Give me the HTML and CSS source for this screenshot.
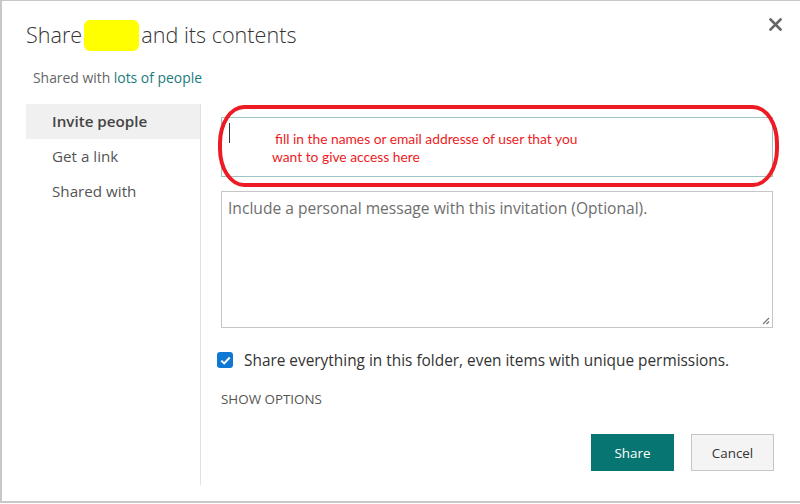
FILE: index.html
```html
<!DOCTYPE html>
<html lang="en">
<head>
<meta charset="utf-8">
<title>Share</title>
<link rel="stylesheet" href="styles.css">
</head>
<body>
<div class="dialog">
  <header class="head">
    <h1 class="title">Share<span class="redact"></span>and its contents</h1>
    <button class="close" aria-label="Close">
      <svg width="13" height="13" viewBox="0 0 13 13"><path d="M1.5 1.5 L11.5 11.5 M11.5 1.5 L1.5 11.5" stroke="#666" stroke-width="2.6" stroke-linecap="square" fill="none"/></svg>
    </button>
  </header>
  <p class="shared">Shared with <a class="link">lots of people</a></p>
  <div class="body">
    <nav class="nav">
      <div class="nav-item active">Invite people</div>
      <div class="nav-item">Get a link</div>
      <div class="nav-item">Shared with</div>
    </nav>
    <main class="main">
      <div class="picker-wrap">
        <div class="picker"><span class="caret"></span></div>
        <div class="annot">
          <p class="annot-text"><span class="l1">fill in the names or email addresse of user that you</span><br>want to give access here</p>
        </div>
      </div>
      <div class="message">
        <span class="placeholder">Include a personal message with this invitation (Optional).</span>
        <svg class="grip" width="9" height="9" viewBox="0 0 9 9"><path d="M8 2 L2 8 M8 5.5 L5.5 8" stroke="#777" stroke-width="1.2" fill="none"/></svg>
      </div>
      <label class="check">
        <span class="box"><svg width="11" height="9" viewBox="0 0 11 9"><path d="M1.3 4.6 L4.2 7.4 L9.7 1.5" stroke="#fff" stroke-width="2" fill="none"/></svg></span>
        <span class="check-text">Share everything in this folder, even items with unique permissions.</span>
      </label>
      <div class="options">SHOW OPTIONS</div>
      <div class="actions">
        <button class="btn primary">Share</button>
        <button class="btn">Cancel</button>
      </div>
    </main>
  </div>
</div>
</body>
</html>
```
FILE: styles.css
```css
* { box-sizing: border-box; }
html, body { margin: 0; padding: 0; background: #fff; }
body { font-family: "Open Sans", "Noto Sans", sans-serif; color: #333; }

.dialog {
  width: 800px;
  height: 503px;
  border-top: 1px solid #c8c8c8;
  border-left: 2px solid #c8c8c8;
  border-bottom: 2px solid #c8c8c8;
  display: flex;
  flex-direction: column;
}

.head {
  display: flex;
  justify-content: space-between;
  align-items: flex-start;
  padding: 18px 18px 0 24px;
}
.title {
  margin: 0;
  font-size: 21.6px;
  font-weight: 300;
  line-height: 32px;
  color: #333;
  display: flex;
  align-items: center;
}
.redact {
  display: inline-block;
  width: 55px;
  height: 31px;
  margin: 0 2px 0 2px;
  background: #ffff00;
  border-radius: 6px;
}
.close {
  border: 0;
  background: none;
  padding: 0;
  margin-top: -1px;
  width: 13px;
  height: 13px;
  display: block;
}
.close svg { display: block; }

.shared {
  margin: 17px 0 0 31px;
  font-size: 13.9px;
  line-height: 20px;
  color: #666;
}
.link { color: #1b7b7b; }

.body {
  display: flex;
  margin-top: 16px;
  height: 381px;
}
.nav {
  width: 175px;
  margin-left: 24px;
  border-right: 1px solid #e1e1e1;
}
.nav-item {
  height: 35px;
  line-height: 35px;
  padding-left: 26px;
  font-size: 15.2px;
  color: #555;
}
.nav-item.active {
  background: #f0f0f0;
  font-weight: 600;
  color: #444;
}

.main {
  width: 552px;
  margin-left: 20px;
  padding-top: 13px;
  display: flex;
  flex-direction: column;
}

.picker-wrap { position: relative; }
.picker {
  height: 60px;
  border: 1px solid #9cc4c4;
  padding: 5px 0 0 7px;
}
.caret {
  display: block;
  width: 1px;
  height: 20px;
  background: #333;
}
.annot {
  position: absolute;
  left: -3px;
  right: -6px;
  top: -12px;
  bottom: -10px;
  border: 4px solid #ed1c24;
  border-radius: 26px / 38px;
}
.annot-text {
  margin: 0;
  position: absolute;
  left: 50px;
  top: 21px;
  font-family: "Lato", sans-serif;
  font-size: 13.8px;
  line-height: 18px;
  color: #ed1c24;
}
.annot-text .l1 { margin-left: 3px; }

.message {
  position: relative;
  margin-top: 14px;
  height: 137px;
  border: 1px solid #c6c6c6;
  padding: 5px 6px;
}
.placeholder {
  font-size: 15.6px;
  line-height: 22px;
  color: #6e6e6e;
}
.grip {
  position: absolute;
  right: 2px;
  bottom: 2px;
}

.check {
  display: flex;
  align-items: center;
  margin: 22px 0 0 -4px;
  height: 20px;
}
.box {
  width: 16px;
  height: 16px;
  border-radius: 3px;
  background: #0f78d4;
  display: flex;
  align-items: center;
  justify-content: center;
}
.check-text {
  margin-left: 11px;
  font-size: 15.4px;
  line-height: 20px;
  color: #333;
  position: relative;
  top: 1px;
}

.options {
  margin-top: 20px;
  font-size: 13.4px;
  line-height: 18px;
  color: #555;
}

.actions {
  display: flex;
  justify-content: flex-end;
  gap: 17px;
  margin-top: 26px;
  margin-right: -1px;
}
.btn {
  width: 83px;
  height: 37px;
  border: 1px solid #c6c6c6;
  background: #f4f4f4;
  font-family: "Open Sans", sans-serif;
  font-size: 13.4px;
  color: #333;
  padding: 0;
}
.btn.primary {
  background: #077571;
  border-color: #077571;
  color: #fff;
}
```
